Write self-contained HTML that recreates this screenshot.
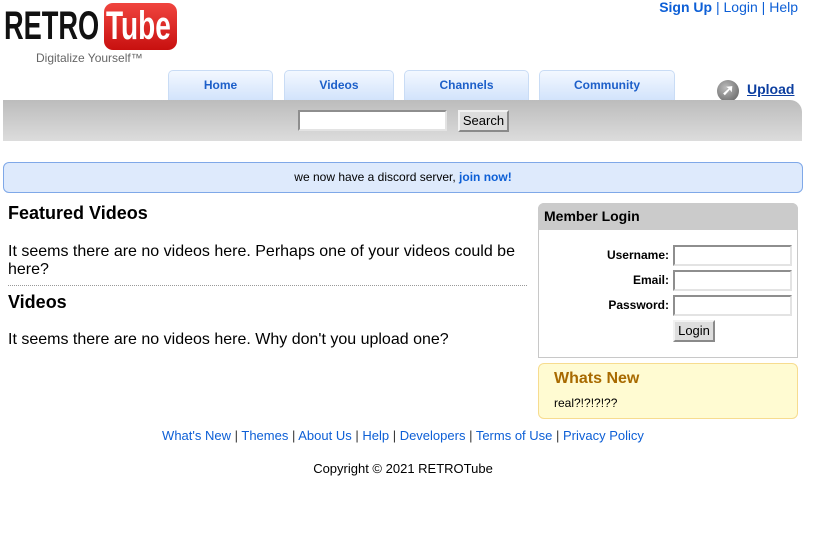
<!DOCTYPE html>
<html><head><meta charset="utf-8"><style>
body{margin:0;width:827px;height:551px;background:#fff;font-family:"Liberation Sans",Arial,sans-serif;position:relative;overflow:hidden}
.a{position:absolute}
a{color:#0d5fd6;text-decoration:none}
.tab{position:absolute;top:70px;height:30px;border:1px solid #c9dcf5;border-bottom:none;border-radius:5px 5px 0 0;background:linear-gradient(#f3f8ff,#d2e3fb);text-align:center;font-size:12px;font-weight:bold;line-height:28px;color:#1d5fc9;box-sizing:border-box}
input.t{position:absolute;border:2px solid;border-color:#8e8e8e #e3e3e3 #e3e3e3 #8e8e8e;background:#fff;box-sizing:border-box;height:21px;padding:0}
.btn{position:absolute;background:#ddd;border:2px solid;border-color:#f2f2f2 #8a8a8a #8a8a8a #f2f2f2;font-size:13px;text-align:center;box-sizing:border-box;line-height:17px}
.lbl{position:absolute;right:158px;font-size:12px;font-weight:bold;width:100px;text-align:right}
</style></head><body>
<div class="a" style="left:4px;top:4px;font-size:40px;font-weight:bold;color:#111;transform:scaleX(0.68);transform-origin:left;line-height:44px">RETRO</div>
<div class="a" style="left:104px;top:3px;width:73px;height:47px;border-radius:9px;background:linear-gradient(#f0453f,#c8100f)"></div>
<div class="a" style="left:106px;top:3px;font-size:40px;font-weight:bold;color:#fff;line-height:46px;transform:scaleX(0.7);transform-origin:left">Tube</div>
<div class="a" style="left:36px;top:51px;font-size:12px;color:#666">Digitalize Yourself™</div>
<div class="a" style="right:29px;top:-1px;font-size:14px;color:#0d5fd6"><a style="font-weight:bold" href="#">Sign Up</a> | <a href="#">Login</a> | <a href="#">Help</a></div>
<div class="tab" style="left:168px;width:105px">Home</div>
<div class="tab" style="left:284px;width:110px">Videos</div>
<div class="tab" style="left:404px;width:125px">Channels</div>
<div class="tab" style="left:539px;width:136px">Community</div>
<div class="a" style="left:717px;top:80px;width:22px;height:22px;border-radius:50%;background:radial-gradient(circle at 40% 35%,#bbb,#5a5a5a);color:#fff;font-size:15px;font-weight:bold;line-height:22px;text-align:center">➚</div>
<div class="a" style="left:747px;top:81px;font-size:14px;font-weight:bold"><a href="#" style="text-decoration:underline;color:#0d3fa0">Upload</a></div>
<div class="a" style="left:3px;top:100px;width:799px;height:41px;background:linear-gradient(#bcbcbc,#dcdcdc);border-radius:0 12px 0 0"></div>
<input class="t" style="left:298px;top:110px;width:149px">
<div class="btn" style="left:458px;top:110px;width:51px;height:22px">Search</div>
<div class="a" style="left:3px;top:162px;width:798px;height:29px;border:1px solid #7fa8e8;border-radius:6px;background:#deeafc;font-size:12px;text-align:center;line-height:29px">we now have a discord server, <a style="font-weight:bold" href="#">join now!</a></div>
<div class="a" style="left:8px;top:203px;font-size:18px;font-weight:bold">Featured Videos</div>
<div class="a" style="left:8px;top:243px;width:520px;font-size:16px;line-height:18px">It seems there are no videos here. Perhaps one of your videos could be here?</div>
<div class="a" style="left:8px;top:285px;width:519px;border-top:1px dotted #999"></div>
<div class="a" style="left:8px;top:292px;font-size:18px;font-weight:bold">Videos</div>
<div class="a" style="left:8px;top:331px;font-size:16px">It seems there are no videos here. Why don't you upload one?</div>
<div class="a" style="left:538px;top:203px;width:258px;height:153px;border:1px solid #c8c8c8;border-radius:6px 6px 0 0"></div>
<div class="a" style="left:538px;top:203px;width:260px;height:27px;background:#cbcbcb;border-radius:6px 6px 0 0;font-size:14px;font-weight:bold;line-height:27px;text-indent:6px">Member Login</div>
<div class="lbl" style="top:248px">Username:</div>
<div class="lbl" style="top:273px">Email:</div>
<div class="lbl" style="top:298px">Password:</div>
<input class="t" style="left:673px;top:245px;width:119px">
<input class="t" style="left:673px;top:270px;width:119px">
<input class="t" style="left:673px;top:295px;width:119px">
<div class="btn" style="left:673px;top:320px;width:42px;height:22px">Login</div>
<div class="a" style="left:538px;top:363px;width:258px;height:54px;border:1px solid #f7dc8f;border-radius:6px;background:#fffbd2"></div>
<div class="a" style="left:554px;top:370px;font-size:16px;font-weight:bold;color:#a86a00">Whats New</div>
<div class="a" style="left:554px;top:396px;font-size:12px">real?!?!?!??</div>
<div class="a" style="left:0;width:806px;top:428px;text-align:center;font-size:13px;color:#333"><a href="#">What's New</a> | <a href="#">Themes</a> | <a href="#">About Us</a> | <a href="#">Help</a> | <a href="#">Developers</a> | <a href="#">Terms of Use</a> | <a href="#">Privacy Policy</a></div>
<div class="a" style="left:0;width:806px;top:461px;text-align:center;font-size:13px">Copyright © 2021 RETROTube</div>
</body></html>
